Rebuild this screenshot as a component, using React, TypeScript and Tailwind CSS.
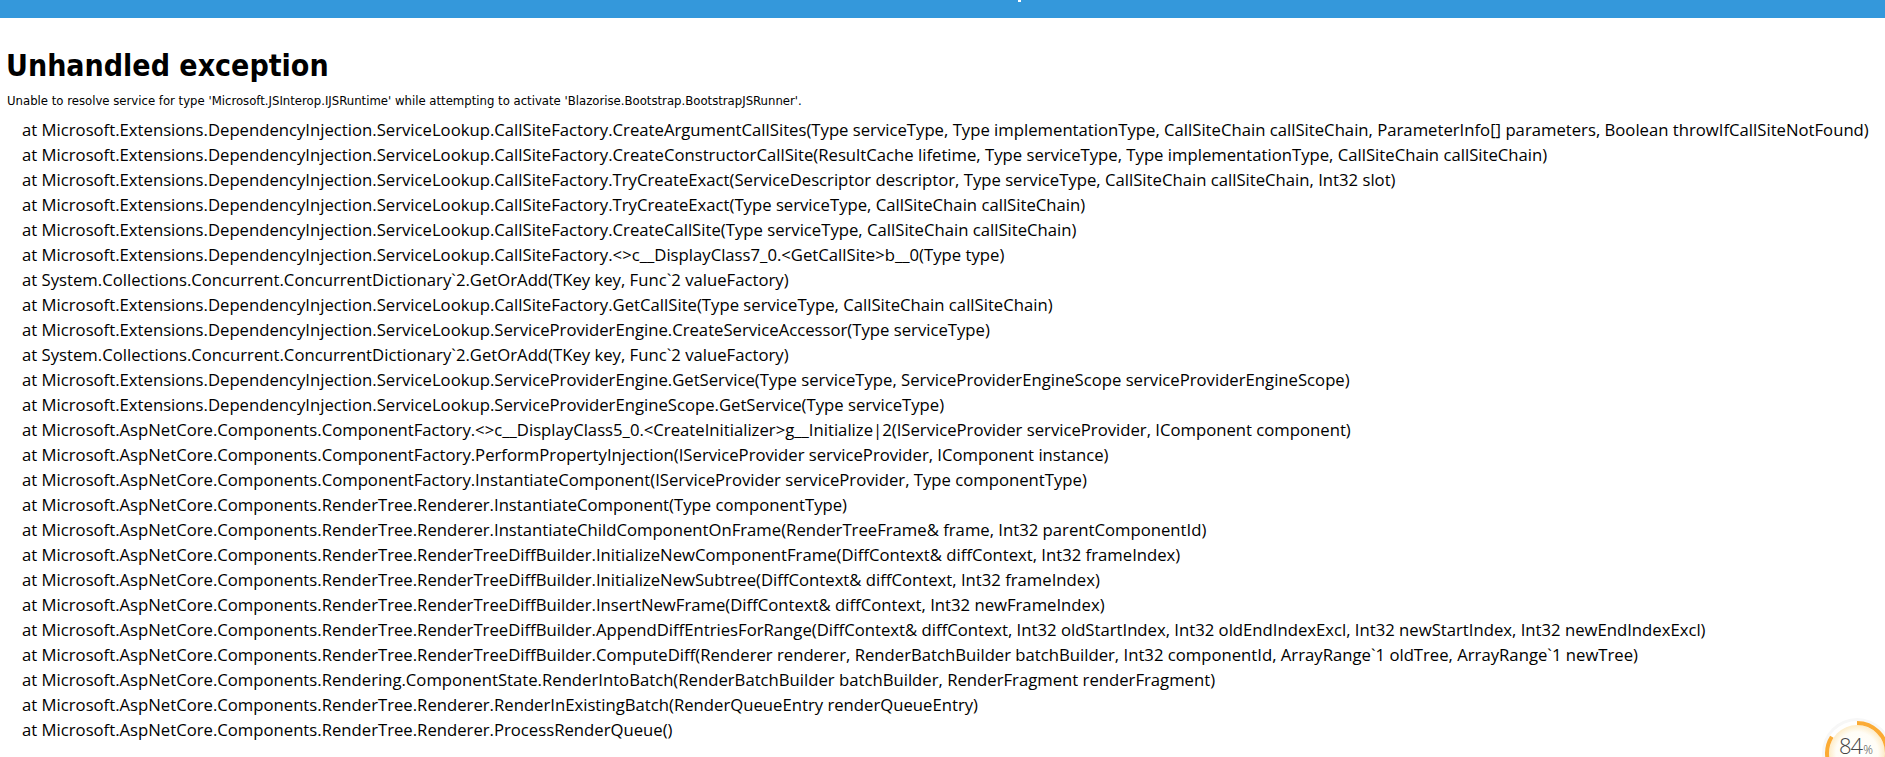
import React from "react";

const lines = [
  "at Microsoft.Extensions.DependencyInjection.ServiceLookup.CallSiteFactory.CreateArgumentCallSites(Type serviceType, Type implementationType, CallSiteChain callSiteChain, ParameterInfo[] parameters, Boolean throwIfCallSiteNotFound)",
  "at Microsoft.Extensions.DependencyInjection.ServiceLookup.CallSiteFactory.CreateConstructorCallSite(ResultCache lifetime, Type serviceType, Type implementationType, CallSiteChain callSiteChain)",
  "at Microsoft.Extensions.DependencyInjection.ServiceLookup.CallSiteFactory.TryCreateExact(ServiceDescriptor descriptor, Type serviceType, CallSiteChain callSiteChain, Int32 slot)",
  "at Microsoft.Extensions.DependencyInjection.ServiceLookup.CallSiteFactory.TryCreateExact(Type serviceType, CallSiteChain callSiteChain)",
  "at Microsoft.Extensions.DependencyInjection.ServiceLookup.CallSiteFactory.CreateCallSite(Type serviceType, CallSiteChain callSiteChain)",
  "at Microsoft.Extensions.DependencyInjection.ServiceLookup.CallSiteFactory.<>c__DisplayClass7_0.<GetCallSite>b__0(Type type)",
  "at System.Collections.Concurrent.ConcurrentDictionary`2.GetOrAdd(TKey key, Func`2 valueFactory)",
  "at Microsoft.Extensions.DependencyInjection.ServiceLookup.CallSiteFactory.GetCallSite(Type serviceType, CallSiteChain callSiteChain)",
  "at Microsoft.Extensions.DependencyInjection.ServiceLookup.ServiceProviderEngine.CreateServiceAccessor(Type serviceType)",
  "at System.Collections.Concurrent.ConcurrentDictionary`2.GetOrAdd(TKey key, Func`2 valueFactory)",
  "at Microsoft.Extensions.DependencyInjection.ServiceLookup.ServiceProviderEngine.GetService(Type serviceType, ServiceProviderEngineScope serviceProviderEngineScope)",
  "at Microsoft.Extensions.DependencyInjection.ServiceLookup.ServiceProviderEngineScope.GetService(Type serviceType)",
  "at Microsoft.AspNetCore.Components.ComponentFactory.<>c__DisplayClass5_0.<CreateInitializer>g__Initialize|2(IServiceProvider serviceProvider, IComponent component)",
  "at Microsoft.AspNetCore.Components.ComponentFactory.PerformPropertyInjection(IServiceProvider serviceProvider, IComponent instance)",
  "at Microsoft.AspNetCore.Components.ComponentFactory.InstantiateComponent(IServiceProvider serviceProvider, Type componentType)",
  "at Microsoft.AspNetCore.Components.RenderTree.Renderer.InstantiateComponent(Type componentType)",
  "at Microsoft.AspNetCore.Components.RenderTree.Renderer.InstantiateChildComponentOnFrame(RenderTreeFrame& frame, Int32 parentComponentId)",
  "at Microsoft.AspNetCore.Components.RenderTree.RenderTreeDiffBuilder.InitializeNewComponentFrame(DiffContext& diffContext, Int32 frameIndex)",
  "at Microsoft.AspNetCore.Components.RenderTree.RenderTreeDiffBuilder.InitializeNewSubtree(DiffContext& diffContext, Int32 frameIndex)",
  "at Microsoft.AspNetCore.Components.RenderTree.RenderTreeDiffBuilder.InsertNewFrame(DiffContext& diffContext, Int32 newFrameIndex)",
  "at Microsoft.AspNetCore.Components.RenderTree.RenderTreeDiffBuilder.AppendDiffEntriesForRange(DiffContext& diffContext, Int32 oldStartIndex, Int32 oldEndIndexExcl, Int32 newStartIndex, Int32 newEndIndexExcl)",
  "at Microsoft.AspNetCore.Components.RenderTree.RenderTreeDiffBuilder.ComputeDiff(Renderer renderer, RenderBatchBuilder batchBuilder, Int32 componentId, ArrayRange`1 oldTree, ArrayRange`1 newTree)",
  "at Microsoft.AspNetCore.Components.Rendering.ComponentState.RenderIntoBatch(RenderBatchBuilder batchBuilder, RenderFragment renderFragment)",
  "at Microsoft.AspNetCore.Components.RenderTree.Renderer.RenderInExistingBatch(RenderQueueEntry renderQueueEntry)",
  "at Microsoft.AspNetCore.Components.RenderTree.Renderer.ProcessRenderQueue()",
];

function Progress() {
  const r = 30;
  const c = 2 * Math.PI * r;
  return (
    <div className="absolute left-[1821px] top-[717px] w-[72px] h-[72px]">
      <svg width="72" height="72" viewBox="0 0 72 72">
        <defs>
          <radialGradient id="g" cx="50%" cy="50%" r="50%">
            <stop offset="0%" stopColor="#ffffff" />
            <stop offset="75%" stopColor="#fffdf6" />
            <stop offset="100%" stopColor="#fdecc8" />
          </radialGradient>
        </defs>
        <circle cx="36" cy="36" r="35" fill="#f7f7f7" />
        <circle cx="36" cy="36" r="32" fill="#ffffff" />
        <circle cx="36" cy="36" r="28" fill="url(#g)" />
        <circle
          cx="36"
          cy="36"
          r={r}
          fill="none"
          stroke="#fbab35"
          strokeWidth="4"
          strokeDasharray={`${c * 0.84} ${c}`}
          transform="rotate(-90 36 36)"
        />
      </svg>
      <div className="absolute left-[18px] top-[17px] flex items-baseline text-[#444] font-['Open_Sans',sans-serif] font-light leading-none">
        <span className="text-[22px] tracking-[-1px]">84</span>
        <span className="text-[12px] ml-[1px]">%</span>
      </div>
    </div>
  );
}

export default function App() {
  return (
    <div className="relative w-[1885px] h-[757px] overflow-hidden bg-white text-black flex flex-col">
      <div className="relative h-[18px] shrink-0 bg-[#3498db]">
        <div className="absolute left-[1018px] top-0 w-[3px] h-[2px] bg-white" />
      </div>
      <main className="flex flex-col pt-[30px]">
        <h1 className="pl-[6px] h-[36px] leading-[36px] text-[30px] font-bold font-['Liberation_Sans_Narrow','DejaVu_Sans_Condensed',sans-serif]">
          Unhandled exception
        </h1>
        <p className="mt-[9px] pl-[7px] h-[16px] leading-[16px] text-[13px] font-['Liberation_Sans_Narrow','DejaVu_Sans_Condensed',sans-serif]">
          Unable to resolve service for type 'Microsoft.JSInterop.IJSRuntime' while attempting to activate 'Blazorise.Bootstrap.BootstrapJSRunner'.
        </p>
        <div className="mt-[8px] pl-[22px] flex flex-col font-['Open_Sans',sans-serif] text-[16.7px] leading-[25px]">
          {lines.map((l, i) => (
            <div key={i} className="whitespace-nowrap">
              {l}
            </div>
          ))}
        </div>
      </main>
      <Progress />
    </div>
  );
}
